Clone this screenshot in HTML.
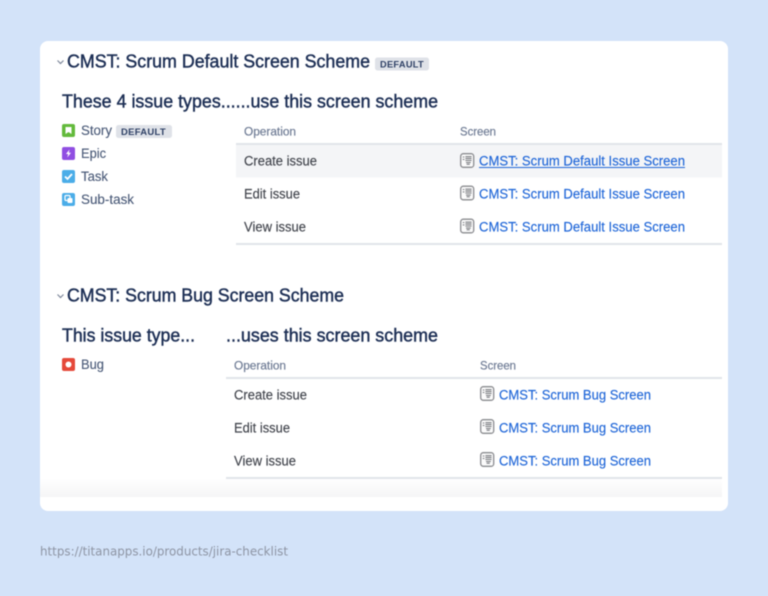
<!DOCTYPE html>
<html lang="en"><head><meta charset="utf-8"><title>Screen schemes</title>
<style>
html,body{margin:0;padding:0;width:768px;height:596px;overflow:hidden;background:#d3e3f9}
svg{display:block;filter:blur(.4px)}
text{font-family:"Liberation Sans",sans-serif}
.h{font-size:18.500px;fill:#1d2f55;stroke:#1d2f55;stroke-width:.45px}
.b{font-size:9.500px;font-weight:700;fill:#2f4166;letter-spacing:.3px}
.i{font-size:13.500px;fill:#4a5a78;stroke:#4a5a78;stroke-width:.12px}
.th{font-size:11.500px;fill:#6f7c95;stroke:#6f7c95;stroke-width:.2px}
.td{font-size:13.500px;fill:#41444c;stroke:#41444c;stroke-width:.15px}
.a{font-size:13.500px;fill:#1f66d8;stroke:#1f66d8;stroke-width:.15px}
.f{font-family:"DejaVu Sans",sans-serif;font-size:12px;fill:#8d94a3}
</style></head><body>
<svg width="768" height="596" viewBox="0 0 768 596" xmlns="http://www.w3.org/2000/svg">
<defs>
<g id="doc"><rect x=".7" y=".7" width="13" height="13.600" rx="2.600" fill="#fbfbfb" stroke="#8b8c90" stroke-width="1.300"/><path d="M2.800 4h1.500M2.800 6.400h1.500M5.400 3.700h6.200M5.400 5.600h6.200M5.400 7.500h6.200M6 9.500h4.800M6.600 11.200h3.200" stroke="#77797e" stroke-width="1.100" fill="none"/></g>
<linearGradient id="g" x1="0" y1="0" x2="0" y2="1"><stop offset="0" stop-color="#fff"/><stop offset="1" stop-color="#f5f5f6"/></linearGradient>
</defs>
<rect x="40" y="41" width="688" height="470" rx="8" fill="#fff"/>
<path d="M40 478H722V497H40Z" fill="url(#g)"/>

<path d="M57.500 60.500l3 3 3-3" fill="none" stroke="#7d879a" stroke-width="1.200"/>
<text class="h" x="67" y="67.500" textLength="303" lengthAdjust="spacingAndGlyphs">CMST: Scrum Default Screen Scheme</text>
<rect x="375" y="57.500" width="54" height="13" rx="2.500" fill="#dfe2e8"/>
<text class="b" x="380" y="67.500" textLength="44" lengthAdjust="spacingAndGlyphs">DEFAULT</text>
<text class="h" x="62" y="107.500" textLength="376" lengthAdjust="spacingAndGlyphs">These 4 issue types......use this screen scheme</text>

<rect x="62" y="124" width="13" height="13" rx="2" fill="#63ba3c"/><path d="M65.500 127h6v7l-3-2-3 2z" fill="#fff"/>
<text class="i" x="81" y="135" textLength="31" lengthAdjust="spacingAndGlyphs">Story</text>
<rect x="116" y="125" width="56" height="13" rx="2.500" fill="#dfe2e8"/>
<text class="b" x="121" y="135" textLength="45" lengthAdjust="spacingAndGlyphs">DEFAULT</text>
<rect x="62" y="147" width="13" height="13" rx="2" fill="#904ee2"/><path d="M69.500 149.500l-3.500 4.500h2.200l-.9 3.500 3.700-4.700h-2.200z" fill="#fff"/>
<text class="i" x="81" y="158" textLength="25" lengthAdjust="spacingAndGlyphs">Epic</text>
<rect x="62" y="170" width="13" height="13" rx="2" fill="#4bade8"/><path d="M65 176.500l2.500 2.500 4.500-5" fill="none" stroke="#fff" stroke-width="1.800"/>
<text class="i" x="81" y="181" textLength="27" lengthAdjust="spacingAndGlyphs">Task</text>
<rect x="62" y="193" width="13" height="13" rx="2" fill="#4bade8"/><rect x="65" y="195.500" width="5" height="5" rx="1" fill="none" stroke="#fff" stroke-width="1.200"/><rect x="67.500" y="198" width="5" height="5" rx="1" fill="#fff"/>
<text class="i" x="81" y="204" textLength="53" lengthAdjust="spacingAndGlyphs">Sub-task</text>

<text class="th" x="244" y="135.500" textLength="52" lengthAdjust="spacingAndGlyphs">Operation</text>
<text class="th" x="460" y="135.500" textLength="36" lengthAdjust="spacingAndGlyphs">Screen</text>
<rect x="236" y="145" width="486" height="32.500" fill="#f4f5f7"/>
<rect x="236" y="143" width="486" height="2" fill="#e1e4e9"/>
<rect x="236" y="243" width="486" height="2" fill="#e1e4e9"/>
<text class="td" x="244" y="165.500" textLength="73" lengthAdjust="spacingAndGlyphs">Create issue</text>
<text class="td" x="244" y="198.500" textLength="56" lengthAdjust="spacingAndGlyphs">Edit issue</text>
<text class="td" x="244" y="231.500" textLength="62" lengthAdjust="spacingAndGlyphs">View issue</text>
<use href="#doc" x="460" y="153"/><use href="#doc" x="460" y="185.500"/><use href="#doc" x="460" y="218.500"/>
<text class="a" x="479" y="165.500" textLength="206" lengthAdjust="spacingAndGlyphs">CMST: Scrum Default Issue Screen</text>
<rect x="479" y="167" width="206" height="1" fill="#1f66d8"/>
<text class="a" x="479" y="198.500" textLength="206" lengthAdjust="spacingAndGlyphs">CMST: Scrum Default Issue Screen</text>
<text class="a" x="479" y="231.500" textLength="206" lengthAdjust="spacingAndGlyphs">CMST: Scrum Default Issue Screen</text>

<path d="M57.500 294.500l3 3 3-3" fill="none" stroke="#7d879a" stroke-width="1.200"/>
<text class="h" x="67" y="301.500" textLength="277" lengthAdjust="spacingAndGlyphs">CMST: Scrum Bug Screen Scheme</text>
<text class="h" x="62" y="341.500" textLength="133" lengthAdjust="spacingAndGlyphs">This issue type...</text>
<text class="h" x="226" y="341.500" textLength="212" lengthAdjust="spacingAndGlyphs">...uses this screen scheme</text>

<rect x="62" y="358" width="13" height="13" rx="2" fill="#e5493a"/><circle cx="68.500" cy="364.500" r="3" fill="#fff"/>
<text class="i" x="81" y="369" textLength="23" lengthAdjust="spacingAndGlyphs">Bug</text>

<text class="th" x="234" y="369.500" textLength="52" lengthAdjust="spacingAndGlyphs">Operation</text>
<text class="th" x="480" y="369.500" textLength="36" lengthAdjust="spacingAndGlyphs">Screen</text>
<rect x="226" y="377" width="496" height="2" fill="#e1e4e9"/>
<rect x="226" y="477" width="496" height="2" fill="#e1e4e9"/>
<text class="td" x="234" y="399.500" textLength="73" lengthAdjust="spacingAndGlyphs">Create issue</text>
<text class="td" x="234" y="432.500" textLength="56" lengthAdjust="spacingAndGlyphs">Edit issue</text>
<text class="td" x="234" y="465.500" textLength="62" lengthAdjust="spacingAndGlyphs">View issue</text>
<use href="#doc" x="480" y="386"/><use href="#doc" x="480" y="419"/><use href="#doc" x="480" y="452"/>
<text class="a" x="499" y="399.500" textLength="152" lengthAdjust="spacingAndGlyphs">CMST: Scrum Bug Screen</text>
<text class="a" x="499" y="432.500" textLength="152" lengthAdjust="spacingAndGlyphs">CMST: Scrum Bug Screen</text>
<text class="a" x="499" y="465.500" textLength="152" lengthAdjust="spacingAndGlyphs">CMST: Scrum Bug Screen</text>

<text class="f" x="40" y="555.500" textLength="248" lengthAdjust="spacingAndGlyphs">https://titanapps.io/products/jira-checklist</text>
</svg>
</body></html>
